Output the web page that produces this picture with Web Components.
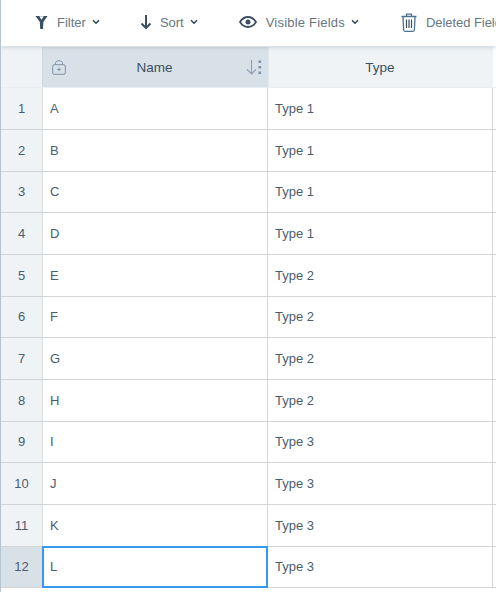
<!DOCTYPE html>
<html>
<head>
<meta charset="utf-8">
<style>
html, body { margin: 0; height: 592px; overflow: hidden; background: #fff; }
body { font: 13px "Liberation Sans", Arial, sans-serif; color: #4b5d6d; }
</style>
</head>
<body>
<table-view></table-view>
<script>
const ICONS = {
  filter: `<svg width="13" height="15" viewBox="0 0 14 16"><path d="M.5 1h13L9 7.500 8.600 15H5.600L5.200 7.500z" fill="#3b4f60"/><path d="M4.600 1.400 7 5l2.400-3.600z" fill="#fff"/></svg>`,
  sort: `<svg width="10" height="16" viewBox="1 0 10 16"><path d="M6 1v13M1.500 9.500 6 14l4.500-4.500" fill="none" stroke="#3b4f60" stroke-width="2"/></svg>`,
  eye: `<svg width="18" height="12" viewBox="0 0 18 12"><path d="M1 6c2-3.200 4.800-5 8-5s6 1.800 8 5c-2 3.200-4.800 5-8 5S3 9.200 1 6z" fill="none" stroke="#3b4f60" stroke-width="1.800"/><circle cx="9" cy="6" r="2.500" fill="#3b4f60"/></svg>`,
  trash: `<svg width="16" height="19" viewBox="0 0 16 19"><path d="M.5 3.500h15M5.500 3.500V1.200h5v2.300M2 3.500l.6 13.300c0 .9.600 1.500 1.500 1.500h7.800c.9 0 1.500-.6 1.500-1.500L14 3.500" fill="none" stroke="#4f7190" stroke-width="1.300"/><path d="M5.500 6.500v8.500M8 6.500v8.500M10.500 6.500v8.500" stroke="#3b4f60" stroke-width="1.200"/></svg>`,
  lock: `<svg width="14" height="15" viewBox="0 0 14 15"><rect x=".7" y="4.700" width="12.600" height="9.600" rx="1.500" fill="none" stroke="#7a93a8" stroke-width="1"/><path d="M3.500 4.700V3.200C3.500 1.700 5 .7 7 .7s3.500 1 3.500 2.500v1.500" fill="none" stroke="#7a93a8"/><path d="M5.200 9.500h3.600M7 7.700v3.600" stroke="#7a93a8"/></svg>`,
  sortAsc: `<svg width="16" height="17" viewBox="0 0 16 17"><path d="M5.500 1v14M1 10.500 5.500 15l4.500-4.500" fill="none" stroke="#8ba1b3" stroke-width="1.100"/><path d="M12.500 1.500h2.600v2.600h-2.600zM12.500 7h2.600v2.600h-2.600zM12.500 12.500h2.600v2.600h-2.600z" fill="#7a93a8"/></svg>`,
  chevron: `<svg width="8" height="6" viewBox="0 0 8 6"><path d="M1 1.300 4 4.300l3-3" fill="none" stroke="#2f4354" stroke-width="1.500"/></svg>`
};

let toolTemplate = document.createElement("template");
toolTemplate.innerHTML = `
<style>
:host { display: flex; align-items: center; flex: none; white-space: nowrap; color: #66777f; }
.icon { display: flex; }
.label { margin-left: 9px; }
.chevron { display: flex; margin-left: 6px; }
</style>
<span class="icon"></span><span class="label"><slot></slot></span><span class="chevron"></span>
`;

class ToolButton extends HTMLElement {
  constructor() {
    super();
    this.attachShadow({ mode: "open" });
    this.shadowRoot.appendChild(toolTemplate.content.cloneNode(true));
  }

  connectedCallback() {
    this.shadowRoot.querySelector(".icon").innerHTML = ICONS[this.getAttribute("icon")];
    if (this.hasAttribute("menu")) {
      this.shadowRoot.querySelector(".chevron").innerHTML = ICONS.chevron;
    }
  }
}

let toolbarTemplate = document.createElement("template");
toolbarTemplate.innerHTML = `
<style>
:host {
  display: flex;
  align-items: center;
  height: 46px;
  padding: 0 0 2px 34px;
  box-sizing: border-box;
  background: #fff;
  box-shadow: 0 1px 4px rgba(90, 115, 135, .35);
  position: relative;
  z-index: 2;
}
</style>
<tool-button icon="filter" menu style="margin-right:41px">Filter</tool-button>
<tool-button icon="sort" menu style="margin-right:41px">Sort</tool-button>
<tool-button icon="eye" menu style="margin-right:42px;letter-spacing:.2px">Visible Fields</tool-button>
<tool-button icon="trash" style="letter-spacing:-.05px">Deleted Fields</tool-button>
`;

class TableToolbar extends HTMLElement {
  constructor() {
    super();
    this.attachShadow({ mode: "open" });
    this.shadowRoot.appendChild(toolbarTemplate.content.cloneNode(true));
  }
}

let rowTemplate = document.createElement("template");
rowTemplate.innerHTML = `
<style>
:host { display: grid; grid-template-columns: 42px 225px 225px; height: 41.667px; box-sizing: border-box; border-bottom: 1px solid #d4d4d4; }
div { display: flex; align-items: center; box-sizing: border-box; padding-left: 7px; border-right: 1px solid #d4d4d4; min-width: 0; position: relative; }
.num { justify-content: center; padding: 0; background: #eff3f6; border-right: 1px solid #d9dee2; }
:host([selected]) .num { background: #d9e1e8; }
:host([selected]) .name::after { content: ""; position: absolute; left: -1px; right: -1px; top: -1px; bottom: -1px; border: 2px solid #3899ec; }
</style>
<div class="num"></div>
<div class="name"></div>
<div class="type"></div>
`;

class TableRow extends HTMLElement {
  constructor() {
    super();
    this.attachShadow({ mode: "open" });
    this.shadowRoot.appendChild(rowTemplate.content.cloneNode(true));
  }

  connectedCallback() {
    this.shadowRoot.querySelector(".num").textContent = this.getAttribute("num");
    this.shadowRoot.querySelector(".name").textContent = this.getAttribute("name");
    this.shadowRoot.querySelector(".type").textContent = this.getAttribute("type");
  }
}

let headTemplate = document.createElement("template");
headTemplate.innerHTML = `
<style>
:host { display: grid; grid-template-columns: 42px 225px 225px; height: 41.33px; box-sizing: border-box; border-bottom: 1px solid #e8edf1; color: #3b4f60; font-size: 13.5px; }
div { display: flex; align-items: center; justify-content: center; position: relative; box-sizing: border-box; }
.corner { background: #eff3f6; border-right: 1px solid #d0d8df; }
.name { background: #d9e1e8; padding-right: 2px; }
.type { background: #eff3f6; border-left: 1px solid #e3e8ec; padding-right: 2px; }
.lock { position: absolute; left: 9px; top: 13px; display: flex; }
.sort { position: absolute; right: 6px; top: 12px; display: flex; }
</style>
<div class="corner"></div>
<div class="name"><span class="lock"></span>Name<span class="sort"></span></div>
<div class="type">Type</div>
`;

class TableHead extends HTMLElement {
  constructor() {
    super();
    this.attachShadow({ mode: "open" });
    this.shadowRoot.appendChild(headTemplate.content.cloneNode(true));
    this.shadowRoot.querySelector(".lock").innerHTML = ICONS.lock;
    this.shadowRoot.querySelector(".sort").innerHTML = ICONS.sortAsc;
  }
}

let viewTemplate = document.createElement("template");
viewTemplate.innerHTML = `
<style>
:host { display: block; height: 592px; overflow: hidden; border-left: 1px solid #b6c4d0; }
table-head { margin-top: 1px; }
</style>
<table-toolbar></table-toolbar>
<table-head></table-head>
<div id="rows"></div>
`;

class TableView extends HTMLElement {
  constructor() {
    super();
    this.attachShadow({ mode: "open" });
    this.shadowRoot.appendChild(viewTemplate.content.cloneNode(true));
  }

  connectedCallback() {
    const rows = this.shadowRoot.getElementById("rows");
    "ABCDEFGHIJKL".split("").forEach((name, i) => {
      const row = document.createElement("table-row");
      row.setAttribute("num", i + 1);
      row.setAttribute("name", name);
      row.setAttribute("type", "Type " + (Math.floor(i / 4) + 1));
      if (i === 11) row.setAttribute("selected", "");
      rows.appendChild(row);
    });
  }
}

customElements.define("tool-button", ToolButton);
customElements.define("table-toolbar", TableToolbar);
customElements.define("table-row", TableRow);
customElements.define("table-head", TableHead);
customElements.define("table-view", TableView);
</script>
</body>
</html>
